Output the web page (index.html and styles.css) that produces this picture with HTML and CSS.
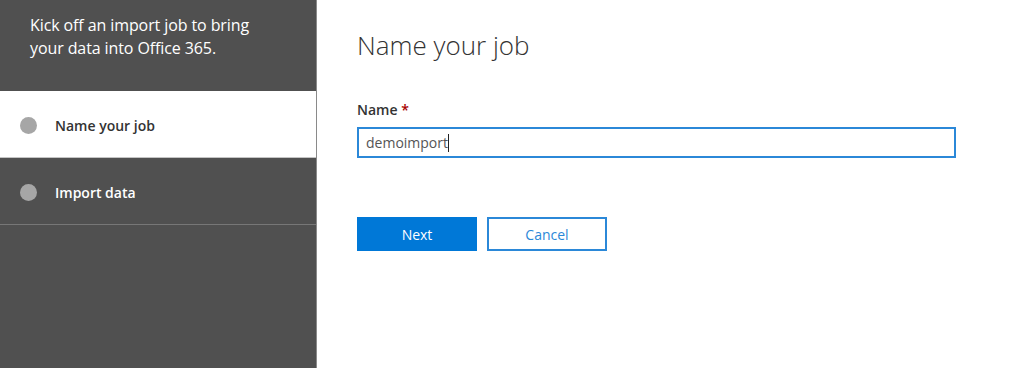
FILE: index.html
```html
<!DOCTYPE html>
<html lang="en">
<head>
    <meta charset="UTF-8">
    <title>Import job</title>
    <link rel="stylesheet" href="styles.css">
</head>
<body>
    <div class="wizard">
        <div class="sidebar">
            <div class="sidebar-intro">Kick off an import job to bring your data into Office 365.</div>
            <div class="step active">
                <span class="step-dot"></span>
                <span class="step-label">Name your job</span>
            </div>
            <div class="step">
                <span class="step-dot"></span>
                <span class="step-label">Import data</span>
            </div>
        </div>
        <div class="content">
            <h1 class="page-title">Name your job</h1>
            <label class="field-label" for="jobName">Name <span class="required">*</span></label>
            <div class="field-input">
                <span class="input-text">demoimport</span><span class="caret"></span>
            </div>
            <div class="actions">
                <button class="btn btn-primary">Next</button>
                <button class="btn btn-secondary">Cancel</button>
            </div>
        </div>
    </div>
</body>
</html>
```

FILE: styles.css
```css
* {
    margin: 0;
    padding: 0;
    box-sizing: border-box;
}

body {
    font-family: "Open Sans", "Noto Sans", Arial, sans-serif;
    background: #fff;
    width: 1022px;
    height: 368px;
    overflow: hidden;
}

.wizard {
    display: flex;
    height: 368px;
}

.sidebar {
    width: 317px;
    flex-shrink: 0;
    background: #505050;
    border-right: 1px solid #8a8a8a;
}

.sidebar-intro {
    height: 91px;
    padding: 14px 40px 0 30px;
    color: #fff;
    font-size: 16px;
    line-height: 23px;
    letter-spacing: -0.1px;
}

.step {
    display: flex;
    align-items: center;
    height: 67px;
    padding-left: 20px;
    padding-top: 2px;
    border-bottom: 1px solid #777;
    color: #fff;
}

.step.active {
    background: #fff;
    color: #333;
    border-bottom-color: #c4c4c4;
}

.step-dot {
    width: 17px;
    height: 17px;
    border-radius: 50%;
    background: #a6a6a6;
    margin-right: 18px;
}

.step-label {
    font-size: 14px;
    font-weight: 600;
}

.content {
    flex: 1;
    padding: 27px 0 0 40px;
}

.page-title {
    font-size: 26px;
    font-weight: 300;
    color: #333;
    line-height: 36px;
    margin-bottom: 37px;
}

.field-label {
    display: block;
    font-size: 14px;
    font-weight: 600;
    color: #333;
    line-height: 20px;
    margin-bottom: 7px;
}

.required {
    color: #a80000;
}

.field-input {
    width: 599px;
    height: 31px;
    border: 2px solid #2b88d8;
    display: flex;
    align-items: center;
    padding-left: 7px;
    font-size: 14px;
    color: #555;
}

.caret {
    width: 1px;
    height: 18px;
    background: #222;
}

.actions {
    display: flex;
    gap: 10px;
    margin-top: 59px;
}

.btn {
    width: 120px;
    height: 34px;
    font-family: inherit;
    font-size: 14px;
    cursor: pointer;
}

.btn-primary {
    background: #0078d7;
    color: #fff;
    border: none;
}

.btn-secondary {
    background: #fff;
    color: #2b88d8;
    border: 2px solid #2b88d8;
}
```
